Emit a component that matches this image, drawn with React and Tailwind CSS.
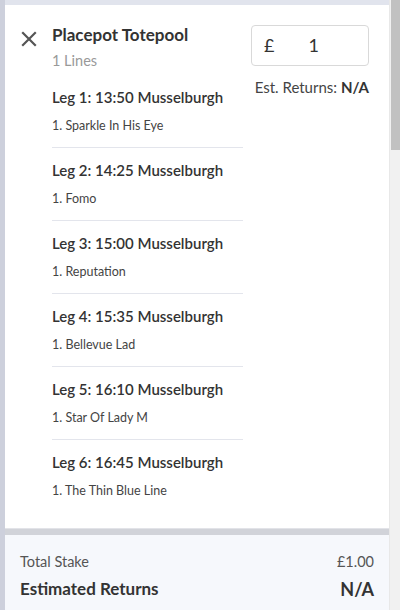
import React from 'react';

const legs = [
  { leg: 1, time: '13:50', course: 'Musselburgh', pick: '1. Sparkle In His Eye' },
  { leg: 2, time: '14:25', course: 'Musselburgh', pick: '1. Fomo' },
  { leg: 3, time: '15:00', course: 'Musselburgh', pick: '1. Reputation' },
  { leg: 4, time: '15:35', course: 'Musselburgh', pick: '1. Bellevue Lad' },
  { leg: 5, time: '16:10', course: 'Musselburgh', pick: '1. Star Of Lady M' },
  { leg: 6, time: '16:45', course: 'Musselburgh', pick: '1. The Thin Blue Line' },
];

const CloseIcon = () => (
  <svg width="16" height="16" viewBox="0 0 16 16" fill="none" stroke="#555" strokeWidth="2.2" strokeLinecap="square">
    <path d="M2 2L14 14M14 2L2 14" />
  </svg>
);

const App = () => {
  return (
    <div className="w-[400px] h-[610px] flex overflow-hidden font-['Lato',sans-serif] text-[#333]">
      <div className="w-[5px] bg-[#cdd0dc]" />

      <div className="w-[384px] flex flex-col">
        <div className="h-[5px] bg-[#e1e4ed]" />

        <div className="h-[523px] bg-white flex pt-[19px] pr-[20px]">
          <div className="w-[47px] flex justify-center pt-[3px] pl-[1px]">
            <div className="mt-[4px]">
              <CloseIcon />
            </div>
          </div>

          <div className="w-[191px] flex flex-col">
            <div className="text-[17px] font-bold leading-[22px]">Placepot Totepool</div>
            <div className="mt-[5px] text-[14.5px] leading-[20px] text-[#999]">1 Lines</div>

            <div className="mt-[16px] flex flex-col">
              {legs.map((l, i) => (
                <div
                  key={l.leg}
                  className={i === 0 ? 'pb-[13px]' : 'border-t border-[#e3e5ec] pt-[12px] pb-[13px]'}
                >
                  <div className="text-[15px] font-semibold leading-[20px]">
                    Leg {l.leg}: {l.time} {l.course}
                  </div>
                  <div className="mt-[11px] text-[12.5px] leading-[16px] text-[#444]">{l.pick}</div>
                </div>
              ))}
            </div>
          </div>

          <div className="ml-[8px] flex-1 flex flex-col items-end">
            <div className="w-[118px] h-[41px] mt-[1px] border border-[#d9d9d9] rounded-[4px] flex items-center pl-[12px] text-[18px] text-[#333]">
              <span>£</span>
              <span className="ml-[34px]">1</span>
            </div>
            <div className="mt-[11px] text-[15px] leading-[20px] text-[#444]">
              Est. Returns: <span className="font-bold text-[#333]">N/A</span>
            </div>
          </div>
        </div>

        <div className="h-[7px] bg-[#d1d3d9] border-t border-[#e2e3e8]" />

        <div className="flex-1 bg-[#f6f8fc] px-[15px] pt-[18px]">
          <div className="flex justify-between items-center text-[14.5px] leading-[18px] text-[#555]">
            <span>Total Stake</span>
            <span>£1.00</span>
          </div>
          <div className="mt-[7px] flex justify-between items-center font-bold text-[#333]">
            <span className="text-[17px] leading-[22px]">Estimated Returns</span>
            <span className="text-[18px] leading-[22px]">N/A</span>
          </div>
        </div>
      </div>

      <div className="w-[11px] bg-[#f1f1f1] border-l border-[#e8e8e8]">
        <div className="h-[150px] ml-[1px] bg-[#c1c1c1]" />
      </div>
    </div>
  );
};

export default App;
